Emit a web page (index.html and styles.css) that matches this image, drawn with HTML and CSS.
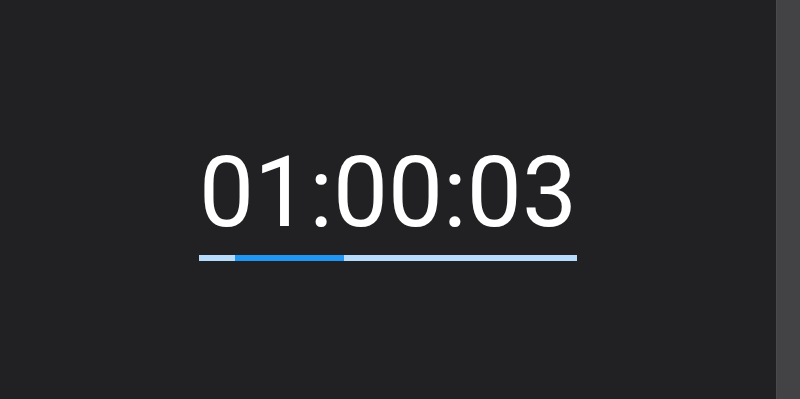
FILE: index.html
```html
<!DOCTYPE html>
<html lang="en">
<head>
<meta charset="utf-8">
<title>Timer</title>
<link rel="stylesheet" href="styles.css">
</head>
<body>
<div class="app">
  <main class="stage">
    <div class="timer">
      <div class="time">01:00:03</div>
      <div class="progress" role="progressbar">
        <div class="progress-bar"></div>
      </div>
    </div>
  </main>
  <div class="side"></div>
</div>
</body>
</html>
```
FILE: styles.css
```css
html, body {
  margin: 0;
  padding: 0;
  height: 100%;
}
body {
  background: #212023;
  font-family: Roboto, "Liberation Sans", sans-serif;
  overflow: hidden;
}
.app {
  display: flex;
  height: 100%;
}
.stage {
  flex: 1;
  display: flex;
  align-items: center;
  justify-content: center;
  padding-bottom: 3px;
}
.timer {
  display: inline-flex;
  flex-direction: column;
  gap: 5px;
}
.time {
  color: #ffffff;
  font-size: 98px;
  font-weight: 400;
  line-height: normal;
  white-space: nowrap;
}
.progress {
  position: relative;
  height: 6px;
  background: #b7dbfb;
  overflow: hidden;
}
.progress-bar {
  position: absolute;
  top: 0;
  bottom: 0;
  left: 9.6%;
  width: 28.7%;
  background: #2196f3;
}
.side {
  width: 24px;
  flex: none;
  background: #434245;
  border-left: 1px solid #4a494c;
  box-sizing: border-box;
}
```
